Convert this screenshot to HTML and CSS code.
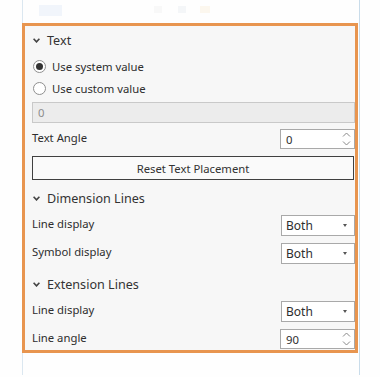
FILE: index.html
```html
<!DOCTYPE html>
<html lang="en">
<head>
  <meta charset="UTF-8" />
  <title>Dimension Properties</title>
  <link rel="stylesheet" href="styles.css">
</head>
<body>
  <div class="window">
    <!-- faded toolbar -->
    <div class="toolbar">
      <span class="tb-tab"></span>
      <span class="tb-icon tb-a"></span>
      <span class="tb-icon tb-b"></span>
      <span class="tb-icon tb-c"></span>
    </div>

    <div class="panel">
      <div class="group-head">
        <svg class="chev" width="7" height="5" viewBox="0 0 7 5"><path d="M0.6 0.8 L3.5 3.9 L6.4 0.8" fill="none" stroke="#444" stroke-width="1.6"/></svg>
        <span>Text</span>
      </div>

      <div class="radios">
        <label class="radio"><span class="dot checked"></span>Use system value</label>
        <label class="radio"><span class="dot"></span>Use custom value</label>
      </div>

      <div class="text-box disabled">0</div>

      <div class="row first">
        <span class="label">Text Angle</span>
        <div class="spin">
          <span>0</span>
          <svg class="arrows" width="9" height="16" viewBox="0 0 9 16"><path d="M1 5.5 L4.5 2 L8 5.5 M1 10.5 L4.5 14 L8 10.5" fill="none" stroke="#8a8a8a" stroke-width="1"/></svg>
        </div>
      </div>

      <button class="reset">Reset Text Placement</button>

      <div class="group-head mid">
        <svg class="chev" width="7" height="5" viewBox="0 0 7 5"><path d="M0.6 0.8 L3.5 3.9 L6.4 0.8" fill="none" stroke="#444" stroke-width="1.6"/></svg>
        <span>Dimension Lines</span>
      </div>

      <div class="row">
        <span class="label">Line display</span>
        <div class="select"><span>Both</span><span class="tri"></span></div>
      </div>
      <div class="row tight">
        <span class="label">Symbol display</span>
        <div class="select"><span>Both</span><span class="tri"></span></div>
      </div>

      <div class="group-head low">
        <svg class="chev" width="7" height="5" viewBox="0 0 7 5"><path d="M0.6 0.8 L3.5 3.9 L6.4 0.8" fill="none" stroke="#444" stroke-width="1.6"/></svg>
        <span>Extension Lines</span>
      </div>

      <div class="row tight">
        <span class="label">Line display</span>
        <div class="select"><span>Both</span><span class="tri"></span></div>
      </div>
      <div class="row">
        <span class="label">Line angle</span>
        <div class="spin">
          <span>90</span>
          <svg class="arrows" width="9" height="16" viewBox="0 0 9 16"><path d="M1 5.5 L4.5 2 L8 5.5 M1 10.5 L4.5 14 L8 10.5" fill="none" stroke="#8a8a8a" stroke-width="1"/></svg>
        </div>
      </div>
    </div>

    <div class="foot"></div>
  </div>
</body>
</html>
```

FILE: styles.css
```css
:root {
  --orange: #e8954f;
  --panel: #f7f7f7;
  --text: #2e2e2e;
  --field: #a9a9a9;
}

body {
  margin: 0;
  background: #fefefe;
  font-family: "Noto Sans", "Open Sans", sans-serif;
  font-size: 11.3px;
  color: var(--text);
}

.window {
  margin-left: 22px;
  width: 336px;
  border-left: 1px solid #dbe7f0;
  border-right: 1px solid #c9dcea;
}

.toolbar {
  height: 23px;
  display: flex;
  align-items: flex-start;
}

.tb-tab {
  margin: 5px 0 0 16px;
  width: 23px;
  height: 11px;
  background: #f1f5fb;
}

.tb-icon {
  margin-top: 6px;
  width: 8px;
  height: 7px;
  background: #f8f8f8;
}

.tb-a { margin-left: 92px; }
.tb-b { margin-left: 16px; background: #f4f6f8; }
.tb-c { margin-left: 14px; width: 10px; background: #fcf7ee; }

.panel {
  margin-left: -1px;
  width: 323px;
  border: 3px solid var(--orange);
  background: var(--panel);
  padding: 4px 0 1px 7px;
}

.group-head {
  height: 20px;
  display: flex;
  align-items: center;
  gap: 7px;
  padding-left: 1px;
  font-size: 12.6px;
  color: #333;
}

.group-head.mid { margin-top: 8px; }
.group-head.low { margin-top: 10px; }

.radios {
  margin-top: 6px;
  display: flex;
  flex-direction: column;
  gap: 2px;
}

.radio {
  height: 20px;
  display: flex;
  align-items: center;
  gap: 6px;
  padding-left: 1px;
}

.dot {
  width: 11px;
  height: 11px;
  border: 1px solid #8f8f8f;
  border-radius: 50%;
  background: #fff;
  display: flex;
  align-items: center;
  justify-content: center;
}

.dot.checked::after {
  content: "";
  width: 7px;
  height: 7px;
  border-radius: 50%;
  background: #333;
}

.text-box {
  margin-top: 4px;
  height: 19px;
  border: 1px solid #c9c9c9;
  background: #ececec;
  color: #8c8c8c;
  padding-left: 5px;
  display: flex;
  align-items: center;
}

.row {
  margin-top: 7px;
  display: flex;
  justify-content: space-between;
  align-items: center;
}

.row.first { margin-top: 6px; }
.row.tight { margin-top: 7px; }

.label { padding-bottom: 4px; }

.spin, .select {
  border: 1px solid var(--field);
  background: #fff;
  display: flex;
  align-items: center;
  justify-content: space-between;
  box-sizing: border-box;
}

.spin {
  width: 75px;
  height: 20px;
  padding: 0 3px 0 5px;
}

.select {
  width: 74px;
  height: 21px;
  padding: 0 7px 0 4px;
  font-size: 12px;
}

.tri {
  width: 0;
  height: 0;
  border-left: 2.5px solid transparent;
  border-right: 2.5px solid transparent;
  border-top: 3px solid #555;
}

.reset {
  margin-top: 7px;
  display: block;
  width: 322px;
  height: 24px;
  border: 1px solid #404040;
  background: #fafafa;
  font-family: inherit;
  font-size: 11.3px;
  color: #333;
  padding: 0;
}

.foot {
  height: 22px;
}
```
